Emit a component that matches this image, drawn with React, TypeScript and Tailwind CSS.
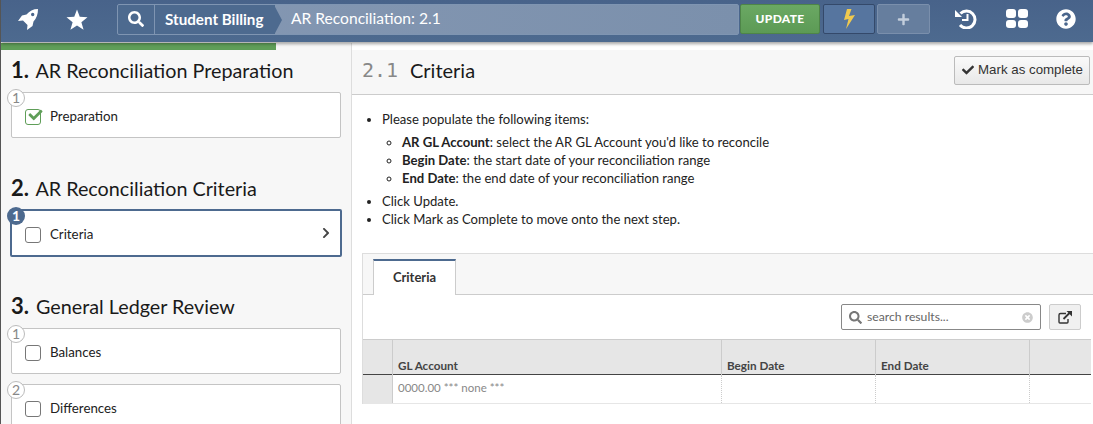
import React from 'react';
import { FaSearch, FaPlus, FaQuestionCircle, FaCheck, FaTimesCircle, FaChevronRight } from 'react-icons/fa';

const sans = { fontFamily: 'Lato, "Noto Sans", sans-serif' };

const RocketIcon = () => (
  <svg width="20" height="21" viewBox="0 0 20 21" fill="white" fillRule="evenodd">
    <path d="M20 0C15 0 11.5 2 8.5 5.5L4 6.5L0 12L5 11.5L9.5 16L9 21L14.5 17L15.5 12.5C18.5 9.5 20 5 20 0ZM13 5.5a1.7 1.7 0 1 0 3.4 0a1.7 1.7 0 1 0 -3.4 0Z" />
  </svg>
);

const StarIcon = () => (
  <svg width="22" height="21" viewBox="0 0 24 23" fill="white">
    <polygon points="12,0.5 15,8.6 23.5,9 16.8,14.4 19.2,22.8 12,18 4.8,22.8 7.2,14.4 0.5,9 9,8.6" />
  </svg>
);

const BoltIcon = () => (
  <svg width="11" height="20" viewBox="0 0 11 20" fill="#f0c94e">
    <polygon points="3,0 7.5,0 5,7 11,6 2,20 4.5,10 0,11" />
  </svg>
);

const HistoryIcon = () => (
  <svg width="22" height="20" viewBox="0 0 22 20" fill="none" stroke="white">
    <path d="M5.5 4.5A8.5 8.5 0 1 1 5 16" strokeWidth="3" />
    <polygon points="0,1 0,8 7,8" fill="white" stroke="none" />
    <path d="M12.5 5V11H7" strokeWidth="2" />
  </svg>
);

const ExternalIcon = () => (
  <svg width="14" height="13" viewBox="0 0 14 13" fill="none" stroke="#333" strokeWidth="1.4">
    <path d="M8 2.5H2.5A1.5 1.5 0 0 0 1 4V11a1 1 0 0 0 1 1H9a1 1 0 0 0 1-1V8" />
    <path d="M5.5 8L12 1.5" strokeWidth="1.8" />
    <polygon points="8.5,0 14,0 14,5.5" fill="#333" stroke="none" />
  </svg>
);

const Step: React.FC<{ n: number; label: string; active?: boolean; done?: boolean; className?: string }> = ({ n, label, active, done, className }) => (
  <div className={`relative h-[46px] flex flex-col ${className || ''}`}>
    <div className={`bg-white rounded-[2px] flex items-center pt-[3px] pl-[13px] pr-[10px] shrink-0 ${active ? 'border-2 border-[#4d6a8f] h-[48px] -mt-px -mx-px' : 'h-[46px] border border-[#c4c4c4]'}`}>
      <span className={`w-4 h-4 rounded-[3px] border-[1.5px] relative mr-[9px] ${done ? 'border-[#5f9e58]' : 'border-[#777]'}`}>
        {done && <FaCheck className="absolute -top-[2px] left-px w-[17px] h-[14px] text-[#5f9e58]" />}
      </span>
      <span className="text-[13.3px] text-[#222] flex-1">{label}</span>
      {active && <FaChevronRight className="w-[8px] h-[12px] text-[#444] -mt-[3px]" />}
    </div>
    <div className={`absolute -left-1 -top-[3.5px] w-[18px] h-[18px] rounded-full flex items-center justify-center text-[14px] leading-none ${active ? 'bg-[#4d6a8f] text-white font-bold' : 'bg-white border border-[#bbb] text-[#888]'}`}>{n}</div>
  </div>
);

const Heading: React.FC<{ n: number; title: string }> = ({ n, title }) => (
  <h2 className="h-7 leading-7 text-[19.75px] text-[#1a1a1a] mb-[8px] pl-[10px]">
    <b className="text-[22px] mr-[2px]">{n}.</b> {title}
  </h2>
);

const GridIcon = () => (
  <span className="grid grid-cols-2 gap-[2px] w-[22px] h-[19px]">
    <i className="bg-white rounded-[3px]" /><i className="bg-white rounded-[3px]" />
    <i className="bg-white rounded-[3px]" /><i className="bg-white rounded-[3px]" />
  </span>
);

export default function App() {
  return (
    <div className="h-[424px] w-[1093px] overflow-hidden flex flex-col bg-white border-l border-[#555]" style={sans}>
      {/* top bar */}
      <div className="h-[42px] shrink-0 bg-gradient-to-b from-[#48638a] to-[#4d6a8f] shadow-[0_2px_3px_rgba(0,0,0,0.35)] relative z-10 flex items-center text-white">
        <div className="w-[116px] flex items-center pl-[17px] gap-[28px] shrink-0 -mt-[3px]">
          <RocketIcon />
          <StarIcon />
        </div>
        <div className="w-[622px] h-[31px] -mt-[4px] rounded-[2px] border border-[#7f95b2] flex bg-gradient-to-r from-[#8598b3] to-[#7b90ac] overflow-hidden">
          <div className="w-[37px] flex items-center justify-center bg-[#4d6a8f] border-r border-[#7f95b2]"><FaSearch className="w-4 h-4" /></div>
          <div className="relative w-[120px] bg-[#4d6a8f] flex items-center pl-[10px] text-[15.2px] font-bold">
            Student Billing
            <span className="absolute -right-[7px] top-0 border-l-[8px] border-l-[#4d6a8f] border-y-[15px] border-y-transparent" />
          </div>
          <div className="pl-[16px] flex items-center text-[15.6px] text-white">AR Reconciliation: 2.1</div>
        </div>
        <div className="ml-px -mt-[4px] w-[80px] h-[30px] rounded-[2px] bg-gradient-to-b from-[#6aa863] to-[#5c9a55] border border-[#4e8548] flex items-center justify-center text-[12px] font-black tracking-wide">UPDATE</div>
        <div className="ml-[3px] -mt-[4px] w-[52px] h-[30px] rounded-[2px] bg-[#56759f] border border-[#34496a] flex items-center justify-center"><BoltIcon /></div>
        <div className="ml-[2px] -mt-[4px] w-[53px] h-[30px] rounded-[2px] bg-[#667e9e] border border-[#7a8fac] flex items-center justify-center"><FaPlus className="w-[13px] h-[13px] text-[#c3cedc]" /></div>
        <div className="flex-1 flex items-center justify-between -mt-[5px] pl-[25px] pr-[17px]">
          <HistoryIcon />
          <GridIcon />
          <FaQuestionCircle className="w-[20px] h-[20px]" />
        </div>
      </div>
      <div className="flex-1 flex min-h-0 pt-px">
        {/* steps column */}
        <div className="w-[351px] shrink-0 bg-[#f7f7f7] border-r border-[#ddd] relative">
          <div className="w-[275px] h-[7px] bg-[#5f9e58]" />
          <div className="pt-[6px]">
            <Heading n={1} title="AR Reconciliation Preparation" />
            <div className="pl-[10px] pr-[10px]"><Step n={1} label="Preparation" done /></div>
            <div className="mt-[36px]"><Heading n={2} title="AR Reconciliation Criteria" /></div>
            <div className="pl-[10px] pr-[10px]"><Step n={1} label="Criteria" active /></div>
            <div className="mt-[36px]"><Heading n={3} title="General Ledger Review" /></div>
            <div className="pl-[10px] pr-[10px]">
              <Step n={1} label="Balances" />
              <Step n={2} label="Differences" className="mt-[10px]" />
            </div>
          </div>
        </div>
        {/* main column */}
        <div className="flex-1 min-w-0 pt-[7px]">
          <div className="h-[45px] bg-[#f7f7f7] border-b border-[#ccc] flex items-center pl-[10px] pr-[3px] pb-[4px]">
            <span className="text-[20px] text-[#888] w-[48px]" style={{ fontFamily: '"DejaVu Sans Mono", monospace' }}>2.1</span>
            <span className="text-[20px] text-[#1a1a1a] flex-1">Criteria</span>
            <button className="h-[29px] w-[136px] rounded-[2px] border border-[#bbb] bg-gradient-to-b from-[#fafafa] to-[#e8e8e8] text-[#333] text-[13.3px] flex items-center pl-[7px] gap-[4px]" style={{ fontFamily: '"Liberation Sans", sans-serif' }}>
              <FaCheck className="w-3 h-3" /> Mark as complete
            </button>
          </div>
          <ul className="list-disc pl-[30px] pt-[15px] text-[13.1px] leading-[18px] text-[#222]">
            <li>Please populate the following items:
              <ul className="list-[circle] pl-[20px] my-[5px]">
                <li><b>AR GL Account</b>: select the AR GL Account you'd like to reconcile</li>
                <li><b>Begin Date</b>: the start date of your reconciliation range</li>
                <li><b>End Date</b>: the end date of your reconciliation range</li>
              </ul>
            </li>
            <li>Click Update.</li>
            <li>Click Mark as Complete to move onto the next step.</li>
          </ul>
          <div className="mt-[25px] ml-[10px] border-t border-l border-[#ddd]">
            <div className="h-[41px] border-b border-[#ccc] bg-[#f7f7f7] pl-[10px] pt-[5px] flex">
              <div className="w-[83px] h-[36px] bg-white border-x border-[#ccc] border-t-2 border-t-[#4d6a8f] text-[13px] font-bold text-[#333] flex items-center justify-center">Criteria</div>
            </div>
            <div className="h-[44px] flex items-center justify-end gap-2 pr-[12px]">
              <div className="w-[200px] h-[26px] rounded-[2px] border border-[#888] flex items-center px-[7px] gap-[5px] text-[12.2px] text-[#666]">
                <FaSearch className="w-[13px] h-[13px] text-[#777]" />
                <span className="flex-1">search results...</span>
                <FaTimesCircle className="w-[11px] h-[11px] text-[#ccc]" />
              </div>
              <div className="w-[32px] h-[26px] rounded-[2px] border border-[#ccc] bg-[#f0f0f0] flex items-center justify-center">
                <ExternalIcon />
              </div>
            </div>
            <div className="mr-[2px]">
              <div className="grid grid-cols-[30px_329px_154px_154px_1fr] h-[36px] bg-[#e6e6e6] border-y border-[#ccc] border-b-[#444] font-bold text-[#444] text-[11.7px]">
                <div className="border-r border-[#ccc]" />
                <div className="border-r border-[#ccc] pl-[5px] pt-[17px]">GL Account</div>
                <div className="border-r border-[#ccc] pl-[5px] pt-[17px]">Begin Date</div>
                <div className="border-r border-[#ccc] pl-[5px] pt-[17px]">End Date</div>
                <div />
              </div>
              <div className="grid grid-cols-[30px_329px_154px_154px_1fr] h-[29px] border-b border-[#e6e6e6] text-[#888] text-[11.5px]">
                <div className="bg-[#e6e6e6] border-r border-[#ccc]" />
                <div className="border-r border-dotted border-[#ccc] pl-[5px] pt-[4px]">0000.00 *** none ***</div>
                <div className="border-r border-dotted border-[#ccc]" />
                <div className="border-r border-dotted border-[#ccc]" />
                <div />
              </div>
            </div>
          </div>
        </div>
      </div>
    </div>
  );
}
